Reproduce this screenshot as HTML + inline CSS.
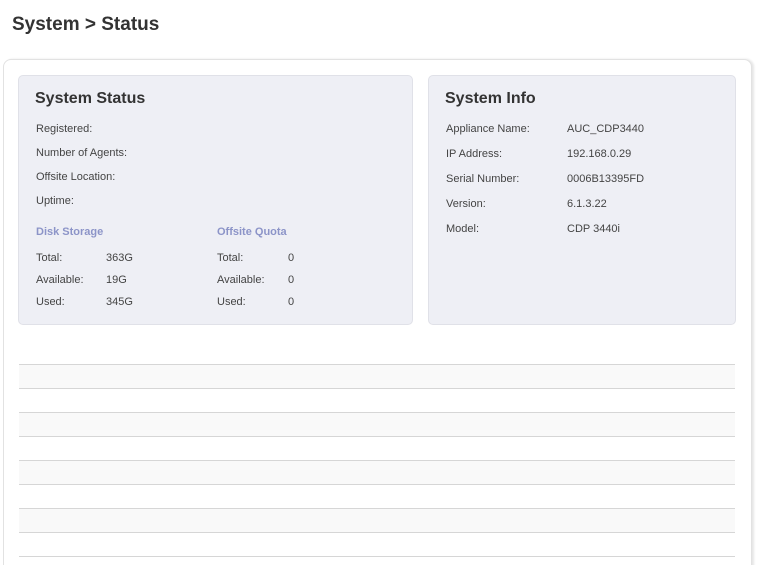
<!DOCTYPE html>
<html style="overflow:hidden;height:565px"><head><style>
body{margin:0;width:776px;height:565px;background:#fff;font-family:"Liberation Sans",sans-serif;position:relative;overflow:hidden}
.a{position:absolute;white-space:nowrap}
h1{position:absolute;left:12px;top:14px;margin:0;font-size:19px;font-weight:bold;color:#333}
.outer{position:absolute;left:3px;top:59px;width:747px;height:520px;border:1px solid #e2e2e2;border-radius:8px;box-shadow:2px 0 2px #e6e6e6;background:#fff}
.card{position:absolute;top:75px;height:248px;background:#eeeff5;border:1px solid #e0e1e8;border-radius:5px}
.t{font-size:16px;font-weight:bold;color:#333}
.l{font-size:11px;color:#444}
.h{font-size:11px;font-weight:bold;color:#8c94c8}
.line{position:absolute;left:19px;width:716px;height:1px;background:#d6d6d6}
.stripe{position:absolute;left:19px;width:716px;height:23px;background:#f9f9f9}
</style></head><body>
<h1>System &gt; Status</h1>
<div class="outer"></div>
<div class="card" style="left:18px;width:393px"></div>
<div class="card" style="left:428px;width:306px"></div>
<div class="a t" style="left:35px;top:90px">System Status</div>
<div class="a l" style="left:36px;top:123px">Registered:</div>
<div class="a l" style="left:36px;top:147px">Number of Agents:</div>
<div class="a l" style="left:36px;top:171px">Offsite Location:</div>
<div class="a l" style="left:36px;top:195px">Uptime:</div>
<div class="a h" style="left:36px;top:226px">Disk Storage</div>
<div class="a h" style="left:217px;top:226px">Offsite Quota</div>
<div class="a l" style="left:36px;top:252px">Total:</div><div class="a l" style="left:106px;top:252px">363G</div>
<div class="a l" style="left:36px;top:274px">Available:</div><div class="a l" style="left:106px;top:274px">19G</div>
<div class="a l" style="left:36px;top:296px">Used:</div><div class="a l" style="left:106px;top:296px">345G</div>
<div class="a l" style="left:217px;top:252px">Total:</div><div class="a l" style="left:288px;top:252px">0</div>
<div class="a l" style="left:217px;top:274px">Available:</div><div class="a l" style="left:288px;top:274px">0</div>
<div class="a l" style="left:217px;top:296px">Used:</div><div class="a l" style="left:288px;top:296px">0</div>
<div class="a t" style="left:445px;top:90px">System Info</div>
<div class="a l" style="left:446px;top:123px">Appliance Name:</div><div class="a l" style="left:567px;top:123px">AUC_CDP3440</div>
<div class="a l" style="left:446px;top:148px">IP Address:</div><div class="a l" style="left:567px;top:148px">192.168.0.29</div>
<div class="a l" style="left:446px;top:173px">Serial Number:</div><div class="a l" style="left:567px;top:173px">0006B13395FD</div>
<div class="a l" style="left:446px;top:198px">Version:</div><div class="a l" style="left:567px;top:198px">6.1.3.22</div>
<div class="a l" style="left:446px;top:223px">Model:</div><div class="a l" style="left:567px;top:223px">CDP 3440i</div>
<div class="stripe" style="top:365px"></div>
<div class="stripe" style="top:413px"></div>
<div class="stripe" style="top:461px"></div>
<div class="stripe" style="top:509px"></div>
<div class="line" style="top:364px"></div>
<div class="line" style="top:388px"></div>
<div class="line" style="top:412px"></div>
<div class="line" style="top:436px"></div>
<div class="line" style="top:460px"></div>
<div class="line" style="top:484px"></div>
<div class="line" style="top:508px"></div>
<div class="line" style="top:532px"></div>
<div class="line" style="top:556px"></div>
</body></html>
